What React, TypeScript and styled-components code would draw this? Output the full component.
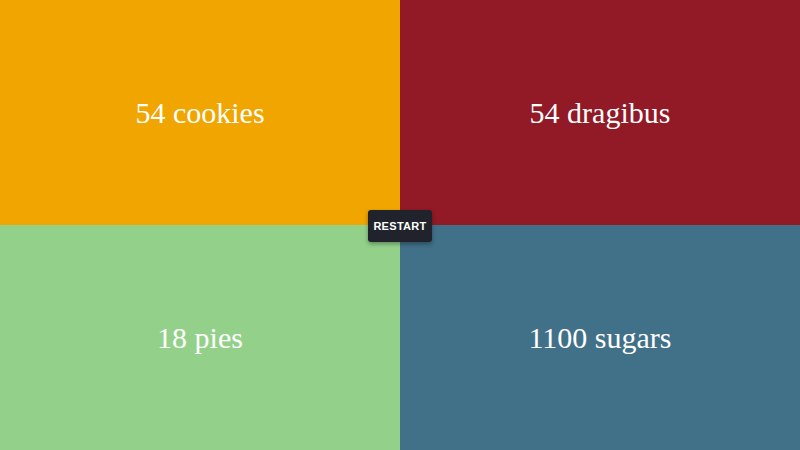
import React from "react";
import styled, { createGlobalStyle } from "styled-components";

const Global = createGlobalStyle`
  html, body { margin: 0; padding: 0; }
  body { font-family: "Liberation Serif", serif; }
`;

const Grid = styled.div`
  position: relative;
  width: 800px;
  height: 450px;
  display: grid;
  grid-template-columns: 1fr 1fr;
  grid-template-rows: 225px 225px;
`;

const Cell = styled.div<{ $bg: string }>`
  background: ${(p) => p.$bg};
  display: flex;
  align-items: center;
  justify-content: center;
  color: #ffffff;
  font-family: "Liberation Serif", serif;
  font-size: 30px;
`;

const Restart = styled.button`
  position: absolute;
  left: 368px;
  top: 210px;
  width: 64px;
  height: 32px;
  border: none;
  border-radius: 3px;
  background: #20232b;
  color: #ffffff;
  font-family: "Liberation Sans", Arial, sans-serif;
  font-weight: bold;
  font-size: 11px;
  letter-spacing: 0.3px;
  box-shadow: 0 2px 4px rgba(0, 0, 0, 0.35);
  padding: 0;
  cursor: pointer;
`;

const items = [
  { label: "54 cookies", bg: "#f0a500" },
  { label: "54 dragibus", bg: "#921926" },
  { label: "18 pies", bg: "#93d18a" },
  { label: "1100 sugars", bg: "#417089" },
];

export default function App() {
  return (
    <>
      <Global />
      <Grid>
        {items.map((it) => (
          <Cell key={it.label} $bg={it.bg}>
            {it.label}
          </Cell>
        ))}
        <Restart>RESTART</Restart>
      </Grid>
    </>
  );
}
